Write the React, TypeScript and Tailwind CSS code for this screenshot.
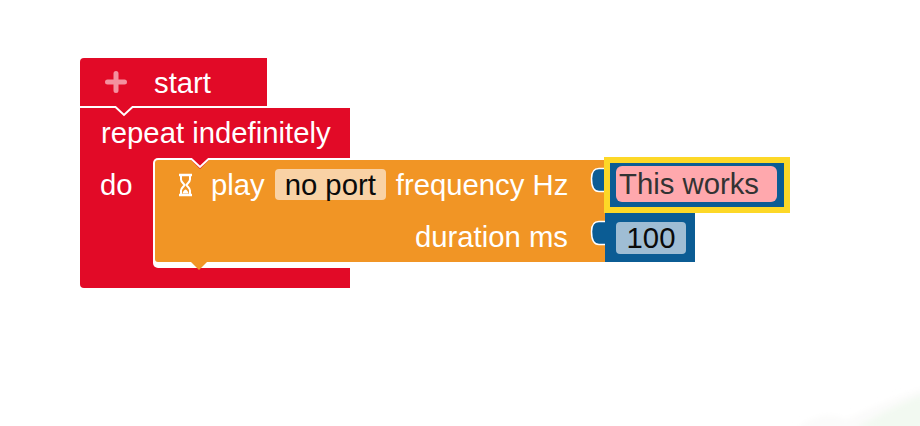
const RED = "bg-[#e20a27]";

function Notch({ className, fill }: { className: string; fill: string }) {
  return (
    <svg viewBox="0 0 22 12" className={`absolute h-[12px] w-[22px] ${className}`}>
      <path d="M0 0H22L11 11Z" fill={fill} />
      <path d="M0 1H2.5L11 9L19.5 1H22" fill="none" stroke="#fff" strokeWidth="2" />
    </svg>
  );
}

function Plus() {
  return (
    <svg viewBox="0 0 22 22" className="h-[22px] w-[22px]">
      <path d="M11 2.5V19.5M2.5 11H19.5" stroke="#f4919f" strokeWidth="5" strokeLinecap="round" />
    </svg>
  );
}

function Hourglass() {
  return (
    <svg viewBox="0 0 15 24" className="h-[24px] w-[15px]" fill="none" stroke="#fff" strokeWidth="2">
      <path d="M1 2H14M1 22H14" strokeWidth="2.500" />
      <path d="M3 3V6.500C3 9 6 10.500 6.500 12C6 13.500 3 15 3 17.500V21M12 3V6.500C12 9 9 10.500 8.500 12C9 13.500 12 15 12 17.500V21" />
      <path d="M4.500 20.500C5 18.500 6 17 7.500 16.500C9 17 10 18.500 10.500 20.500Z" fill="#fff" stroke="none" />
    </svg>
  );
}

function Socket({ className }: { className: string }) {
  return (
    <svg viewBox="0 0 15 26" className={`absolute right-0 h-[26px] w-[15px] ${className}`}>
      <path d="M15 2H8C3 2 1.500 6 1.500 13C1.500 20 3 24 8 24H15Z" fill="#0b5c94" />
      <path d="M15 1.500H9C3.500 1.500 1.500 6 1.500 11.500C1.500 19 4 24.500 9 24.500H15" fill="none" stroke="#fff" strokeWidth="1.500" />
    </svg>
  );
}

export default function App() {
  return (
    <div className="relative h-[426px] w-[920px] overflow-hidden bg-white pl-[80px] pt-[58px] text-[29.300px] leading-none text-white [font-family:'Liberation_Sans',Arial,sans-serif]">
      <svg viewBox="0 0 200 56" className="absolute bottom-0 right-0 h-[56px] w-[200px]">
        <defs>
          <filter id="soft">
            <feGaussianBlur stdDeviation="3" />
          </filter>
        </defs>
        <path d="M75 60C95 44 112 42 126 50C150 38 180 26 204 18V60Z" fill="#fbfbfa" filter="url(#soft)" />
        <path d="M135 60C155 46 180 34 204 24V60Z" fill="#f2f9f1" filter="url(#soft)" />
      </svg>

      <div className="relative">
        {/* start block */}
        <div className={`relative flex h-[48px] w-[187px] items-center rounded-tl-[4px] pl-[25px] ${RED}`}>
          <Plus />
          <span className="ml-[27px] pt-[1px]">start</span>
        </div>
        <div className="h-[2px] w-[270px] bg-white" />

        {/* repeat block */}
        <div className={`relative h-[180px] w-[270px] rounded-bl-[4px] ${RED}`}>
          <Notch className="left-[33px] top-[-2px] z-10" fill="#e20a27" />
          <div className="flex h-[50px] items-center whitespace-nowrap pl-[21px]">repeat indefinitely</div>
          <div className="flex">
            <div className="w-[73px] shrink-0 pl-[20px] pt-[12px]">do</div>

            {/* play block */}
            <div className="relative w-[452px] shrink-0 rounded-l-[5px] bg-white pb-[6px] pl-[2px] pt-[2px]">
              <Notch className="left-[36px] top-0 z-10" fill="#e20a27" />
              <div className="flex h-[52px] items-start">
                <div className="relative flex h-[52px] w-[450px] shrink-0 items-center whitespace-nowrap rounded-tl-[3px] bg-[#f19525] pb-[3px] pl-[23px]">
                  <Hourglass />
                  <span className="ml-[18px]">play</span>
                  <span className="ml-[10px] flex h-[31px] w-[111px] items-center justify-center rounded-[4px] bg-[#f9d2a5] text-[#0a0a0a]">
                    no port
                  </span>
                  <span className="ml-[10px]">frequency Hz</span>
                  <Socket className="top-[7px]" />
                </div>
                <div className="z-10 -ml-[1px] -mt-[3px] h-[56px] w-[186px] shrink-0 border-[6px] border-[#fdd827] bg-[#0b5c94] pl-[6px] pt-[3px]">
                  <div className="flex h-[36px] w-[161px] items-center whitespace-nowrap rounded-[6px] bg-[#ffa8ad] pl-[3px] text-[#333]">
                    This works
                  </div>
                </div>
              </div>
              <div className="flex h-[50px]">
                <div className="relative flex w-[450px] shrink-0 items-center justify-end whitespace-nowrap rounded-bl-[3px] bg-[#f19525] pr-[37px]">
                  <span>duration ms</span>
                  <Socket className="top-[8px]" />
                </div>
                <div className="w-[90px] shrink-0 bg-[#0b5c94] pl-[11px] pt-[10px]">
                  <div className="flex h-[32px] w-[70px] items-center justify-center rounded-[4px] bg-[#9fbdd4] text-[#0a0a0a]">
                    100
                  </div>
                </div>
              </div>
              <svg viewBox="0 0 18 9" className="absolute bottom-[-2px] left-[37px] h-[9px] w-[18px]">
                <path d="M0 0H18L9 9Z" fill="#f19525" />
              </svg>
            </div>
          </div>
        </div>
      </div>
    </div>
  );
}
